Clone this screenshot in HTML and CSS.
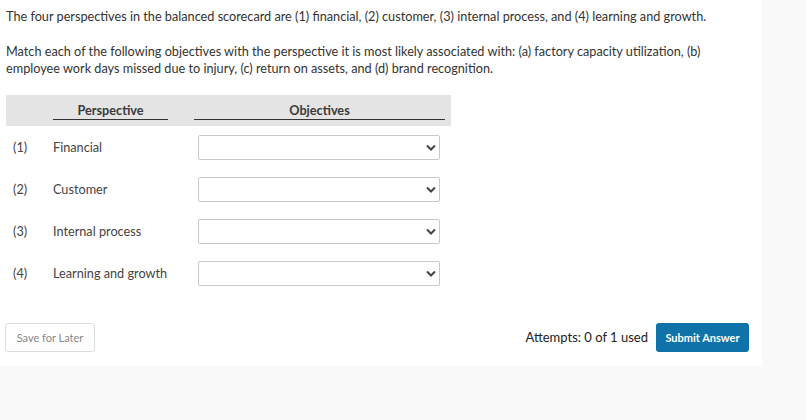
FILE: index.html
```html
<!DOCTYPE html>
<html>
<head>
<meta charset="utf-8">
<link rel="stylesheet" href="styles.css">
</head>
<body>
<div class="panel">
  <p class="intro">The four perspectives in the balanced scorecard are (1) financial, (2) customer, (3) internal process, and (4) learning and growth.</p>
  <p class="task">Match each of the following objectives with the perspective it is most likely associated with: (a) factory capacity utilization, (b) employee work days missed due to injury, (c) return on assets, and (d) brand recognition.</p>
  <div class="matrix">
    <div class="head">
      <div class="hcell hp">Perspective</div>
      <div class="hcell ho">Objectives</div>
    </div>
    <div class="row"><span class="num">(1)</span><span class="name">Financial</span><div class="sel"><svg viewBox="0 0 10 6" class="chev"><path d="M1 1 L5 5 L9 1" /></svg></div></div>
    <div class="row"><span class="num">(2)</span><span class="name">Customer</span><div class="sel"><svg viewBox="0 0 10 6" class="chev"><path d="M1 1 L5 5 L9 1" /></svg></div></div>
    <div class="row"><span class="num">(3)</span><span class="name">Internal process</span><div class="sel"><svg viewBox="0 0 10 6" class="chev"><path d="M1 1 L5 5 L9 1" /></svg></div></div>
    <div class="row"><span class="num">(4)</span><span class="name">Learning and growth</span><div class="sel"><svg viewBox="0 0 10 6" class="chev"><path d="M1 1 L5 5 L9 1" /></svg></div></div>
  </div>
  <div class="actions">
    <button class="save">Save for Later</button>
    <div class="right">
      <span class="attempts">Attempts: 0 of 1 used</span>
      <button class="submit">Submit Answer</button>
    </div>
  </div>
</div>
</body>
</html>
```

FILE: styles.css
```css
html, body {
  margin: 0;
  padding: 0;
  background: #f9f9f9;
}
body {
  font-family: Lato, "Open Sans", sans-serif;
  font-size: 12.7px;
  color: #333;
  width: 806px;
  height: 420px;
  overflow: hidden;
}
.panel {
  width: 762px;
  height: 366px;
  background: #fff;
  box-sizing: border-box;
  padding: 8px 13px 0 6px;
}
p {
  margin: 0;
  line-height: 17px;
}
.intro {
  margin-bottom: 18px;
}
.task {
  margin-bottom: 18px;
}
.matrix {
  width: 445px;
}
.head {
  background: #e4e4e4;
  height: 31px;
  display: grid;
  grid-template-columns: 47px 115px 26px 251px;
  align-items: start;
}
.hcell {
  padding-top: 7px;
  height: 17px;
  line-height: 17px;
  text-align: center;
  border-bottom: 1px solid #333;
  font-weight: 700;
  color: #3a3a3a;
}
.hp { grid-column: 2; }
.ho { grid-column: 4; }
.row {
  height: 42px;
  display: grid;
  grid-template-columns: 47px 145px 242px;
  align-items: center;
}
.num {
  padding-left: 7px;
  color: #444;
}
.name {
  color: #444;
}
.sel {
  height: 25px;
  box-sizing: border-box;
  border: 1px solid #c9c9c9;
  border-radius: 2px;
  display: flex;
  align-items: center;
  justify-content: flex-end;
  padding-right: 3px;
  margin-top: 1px;
}
.chev {
  width: 10px;
  height: 7px;
  fill: none;
  stroke: #444;
  stroke-width: 2;
}
.actions {
  margin-top: 29px;
  margin-left: -1px;
  display: flex;
  justify-content: space-between;
  align-items: center;
}
.right {
  display: flex;
  align-items: center;
  gap: 8px;
}
button {
  font-family: Lato, "Open Sans", sans-serif;
  font-size: 11px;
  height: 29px;
  border-radius: 3px;
  cursor: pointer;
}
.save {
  width: 90px;
  background: #fff;
  border: 1px solid #ddd;
  color: #888;
}
.attempts {
  color: #222;
  font-size: 13px;
  position: relative;
  top: -1px;
}
.submit {
  width: 93px;
  background: #0f72a8;
  border: none;
  color: #fff;
  font-weight: 700;
}
```
